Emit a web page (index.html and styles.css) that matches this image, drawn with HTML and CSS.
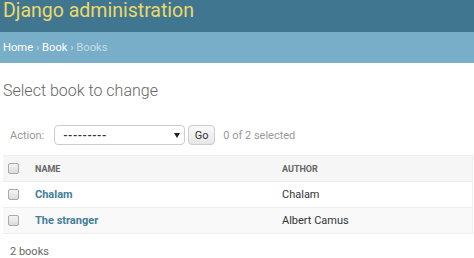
FILE: index.html
```html
<html>

<head>
	<title>Select book to change | Django site admin</title>
	<link rel="stylesheet" href="styles.css">
</head>

<body>
	<div id="header">
		<h1 id="site-name">Django administration</h1>
	</div>
	<div class="breadcrumbs">
		<a href="#">Home</a> › <a href="#">Book</a> › Books
	</div>

	<div id="content">
		<h1>Select book to change</h1>

		<div class="actions">
			<label>Action:
				<span class="select-wrap">
					<select>
						<option>---------</option>
					</select>
				</span>
			</label>
			<button class="button">Go</button>
			<span class="action-counter">0 of 2 selected</span>
		</div>

		<table id="result_list">
			<thead>
				<tr>
					<th class="action-checkbox"><input type="checkbox"></th>
					<th class="col-name">Name</th>
					<th>Author</th>
				</tr>
			</thead>
			<tbody>
				<tr class="row1">
					<td class="action-checkbox"><input type="checkbox"></td>
					<th><a href="#">Chalam</a></th>
					<td>Chalam</td>
				</tr>
				<tr class="row2">
					<td class="action-checkbox"><input type="checkbox"></td>
					<th><a href="#">The stranger</a></th>
					<td>Albert Camus</td>
				</tr>
			</tbody>
		</table>

		<p class="paginator">2 books</p>
	</div>
</body>

</html>
```

FILE: styles.css
```css
* {
	box-sizing: border-box;
}

body {
	margin: 0;
	font-family: Roboto, "Liberation Sans", sans-serif;
	font-size: 11px;
	color: #333;
	background: #fff;
	overflow: hidden;
}

a {
	text-decoration: none;
}

#header {
	background: #417690;
	height: 32px;
	padding: 0 3px;
	overflow: hidden;
}

#site-name {
	margin: 0;
	margin-top: -2px;
	font-size: 19.5px;
	font-weight: 400;
	line-height: 26px;
	color: #ecd96a;
}

.breadcrumbs {
	background: #79aec8;
	height: 31px;
	padding: 0 3px;
	line-height: 31px;
	font-size: 11.2px;
	color: #c4dce8;
}

.breadcrumbs a {
	color: #fff;
}

#content {
	padding: 0 1px 0 3px;
}

#content h1 {
	margin: 17px 0 0;
	font-size: 16px;
	font-weight: 300;
	line-height: 22px;
	color: #666;
}

.actions {
	display: flex;
	align-items: center;
	margin-top: 23px;
	padding-left: 7px;
	height: 20px;
	color: #999;
	font-size: 11px;
}

.actions label {
	display: flex;
	align-items: center;
}

.select-wrap {
	position: relative;
	margin-left: 10px;
}

.select-wrap::after {
	content: "";
	position: absolute;
	right: 5px;
	top: 8px;
	border-left: 3px solid transparent;
	border-right: 3px solid transparent;
	border-top: 5px solid #222;
	pointer-events: none;
}

.actions select {
	appearance: none;
	width: 131px;
	height: 20px;
	font-family: inherit;
	font-size: 11px;
	font-weight: 700;
	letter-spacing: 0.5px;
	color: #333;
	background: #fff;
	border: 1px solid #ccc;
	border-radius: 4px;
	padding: 0 8px;
}

.button {
	margin-left: 3px;
	width: 27px;
	height: 20px;
	padding: 0;
	font-family: inherit;
	font-size: 11px;
	color: #333;
	background: linear-gradient(#fafafa, #e6e6e6);
	border: 1px solid #ccc;
	border-radius: 4px;
}

.action-counter {
	margin-left: 8px;
}

#result_list {
	margin-top: 10px;
	width: 100%;
	border-collapse: collapse;
	border-bottom: 1px solid #ddd;
	border-right: 1px solid #eee;
}

#result_list thead th {
	background: #f6f6f6;
	border-top: 1px solid #eee;
	border-bottom: 1px solid #eee;
	height: 26px;
	font-size: 9px;
	font-weight: 700;
	text-transform: uppercase;
	color: #666;
	text-align: left;
	padding: 0 5px;
}

#result_list td,
#result_list tbody th {
	height: 26px;
	padding: 0 5px;
	text-align: left;
	font-size: 11px;
	font-weight: 400;
	border-bottom: 1px solid #eee;
}

#result_list tbody th a {
	color: #447e9b;
	font-weight: 700;
}

.row2 {
	background: #f9f9f9;
}

.action-checkbox {
	width: 27px;
	padding-left: 5px !important;
}

.action-checkbox input {
	appearance: none;
	margin: 0;
	width: 11px;
	height: 11px;
	vertical-align: middle;
	border: 1px solid #a9a9a9;
	border-radius: 2px;
	background: linear-gradient(#f4f4f4, #dcdcdc);
}

#result_list .col-name {
	width: 247px;
}

.paginator {
	margin: 11px 0 0 7px;
	font-size: 11px;
	color: #666;
}
```
